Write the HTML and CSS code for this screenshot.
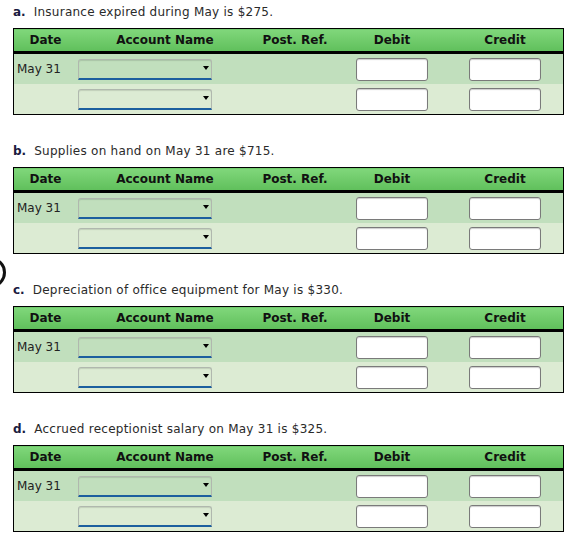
FILE: index.html
```html
<!DOCTYPE html>
<html>
<head>
<meta charset="utf-8">
<link rel="stylesheet" href="styles.css">
</head>
<body>
<div class="ring"></div>
<div class="page">
  <div class="section">
    <div class="title"><b>a.</b> Insurance expired during May is $275.</div>
    <table class="journal">
      <thead><tr><th class="c-date">Date</th><th class="c-acct">Account Name</th><th class="c-ref">Post. Ref.</th><th class="c-debit">Debit</th><th class="c-credit">Credit</th></tr></thead>
      <tbody>
        <tr class="r1"><td class="date">May 31</td><td class="acct"><span class="sel"><select><option></option></select></span></td><td></td><td class="num"><input type="text"></td><td class="num"><input type="text"></td></tr>
        <tr class="r2"><td class="date"></td><td class="acct"><span class="sel"><select><option></option></select></span></td><td></td><td class="num"><input type="text"></td><td class="num"><input type="text"></td></tr>
      </tbody>
    </table>
  </div>
  <div class="section">
    <div class="title"><b>b.</b> Supplies on hand on May 31 are $715.</div>
    <table class="journal">
      <thead><tr><th class="c-date">Date</th><th class="c-acct">Account Name</th><th class="c-ref">Post. Ref.</th><th class="c-debit">Debit</th><th class="c-credit">Credit</th></tr></thead>
      <tbody>
        <tr class="r1"><td class="date">May 31</td><td class="acct"><span class="sel"><select><option></option></select></span></td><td></td><td class="num"><input type="text"></td><td class="num"><input type="text"></td></tr>
        <tr class="r2"><td class="date"></td><td class="acct"><span class="sel"><select><option></option></select></span></td><td></td><td class="num"><input type="text"></td><td class="num"><input type="text"></td></tr>
      </tbody>
    </table>
  </div>
  <div class="section">
    <div class="title"><b>c.</b> Depreciation of office equipment for May is $330.</div>
    <table class="journal">
      <thead><tr><th class="c-date">Date</th><th class="c-acct">Account Name</th><th class="c-ref">Post. Ref.</th><th class="c-debit">Debit</th><th class="c-credit">Credit</th></tr></thead>
      <tbody>
        <tr class="r1"><td class="date">May 31</td><td class="acct"><span class="sel"><select><option></option></select></span></td><td></td><td class="num"><input type="text"></td><td class="num"><input type="text"></td></tr>
        <tr class="r2"><td class="date"></td><td class="acct"><span class="sel"><select><option></option></select></span></td><td></td><td class="num"><input type="text"></td><td class="num"><input type="text"></td></tr>
      </tbody>
    </table>
  </div>
  <div class="section">
    <div class="title"><b>d.</b> Accrued receptionist salary on May 31 is $325.</div>
    <table class="journal">
      <thead><tr><th class="c-date">Date</th><th class="c-acct">Account Name</th><th class="c-ref">Post. Ref.</th><th class="c-debit">Debit</th><th class="c-credit">Credit</th></tr></thead>
      <tbody>
        <tr class="r1"><td class="date">May 31</td><td class="acct"><span class="sel"><select><option></option></select></span></td><td></td><td class="num"><input type="text"></td><td class="num"><input type="text"></td></tr>
        <tr class="r2"><td class="date"></td><td class="acct"><span class="sel"><select><option></option></select></span></td><td></td><td class="num"><input type="text"></td><td class="num"><input type="text"></td></tr>
      </tbody>
    </table>
  </div>
</div>
</body>
</html>
```
FILE: styles.css
```css
html, body {
  margin: 0;
  padding: 0;
  background: #fff;
}
body {
  font-family: "DejaVu Sans", Verdana, sans-serif;
  font-size: 12px;
  color: #222;
  position: relative;
}
.page {
  padding: 5px 15px 0 13px;
}
.section {
  margin-bottom: 29px;
}
.title {
  height: 15px;
  line-height: 15px;
  margin-bottom: 8px;
  color: #2a2a2a;
  letter-spacing: 0.25px;
}
.title b {
  color: #1a1a40;
  margin-right: 4px;
  letter-spacing: 0;
}
.journal {
  width: 549px;
  border-collapse: collapse;
  table-layout: fixed;
  border: 1px solid #000;
}
.journal th {
  height: 22px;
  padding: 0;
  font-weight: bold;
  color: #111;
  text-align: center;
  background: linear-gradient(#80d77b, #5fbf5b);
  border-bottom: 3px solid #000;
}
.c-date { width: 63px; }
.c-acct { width: 176px; }
.c-ref { width: 84px; }
.c-debit { width: 110px; }
.c-credit { width: 116px; }
.journal td {
  height: 30px;
  padding: 0;
  vertical-align: middle;
}
.r1 { background: #c1dfbd; }
.r2 { background: #dcebd3; }
.date {
  padding-left: 3px !important;
  color: #222;
}
.acct {
  padding-left: 1px !important;
}
.sel {
  position: relative;
  display: block;
  width: 134px;
  height: 21px;
}
.sel select {
  -webkit-appearance: none;
  appearance: none;
  display: block;
  width: 134px;
  height: 21px;
  margin: 0;
  padding: 0;
  background: transparent;
  border: 1px solid #b0b8ae;
  border-bottom: 2px solid #1c5f9e;
  border-radius: 3px 3px 0 0;
  box-shadow: inset 0 1px 1px rgba(0,0,0,0.12);
}
.sel::after {
  content: "";
  position: absolute;
  right: 3px;
  top: 7px;
  border-left: 3.5px solid transparent;
  border-right: 3.5px solid transparent;
  border-top: 4px solid #000;
}
.num {
  text-align: center;
}
.num input {
  box-sizing: border-box;
  width: 72px;
  height: 23px;
  margin: 1px 0 0 0;
  padding: 0;
  background: #fff;
  border: 1px solid #7a7a7a;
  border-radius: 3px;
  box-shadow: inset 0 1px 1px rgba(0,0,0,0.2);
  vertical-align: middle;
}
.ring {
  position: absolute;
  left: -25px;
  top: 257px;
  width: 25px;
  height: 25px;
  border: 3px solid #111;
  border-radius: 50%;
}
```
